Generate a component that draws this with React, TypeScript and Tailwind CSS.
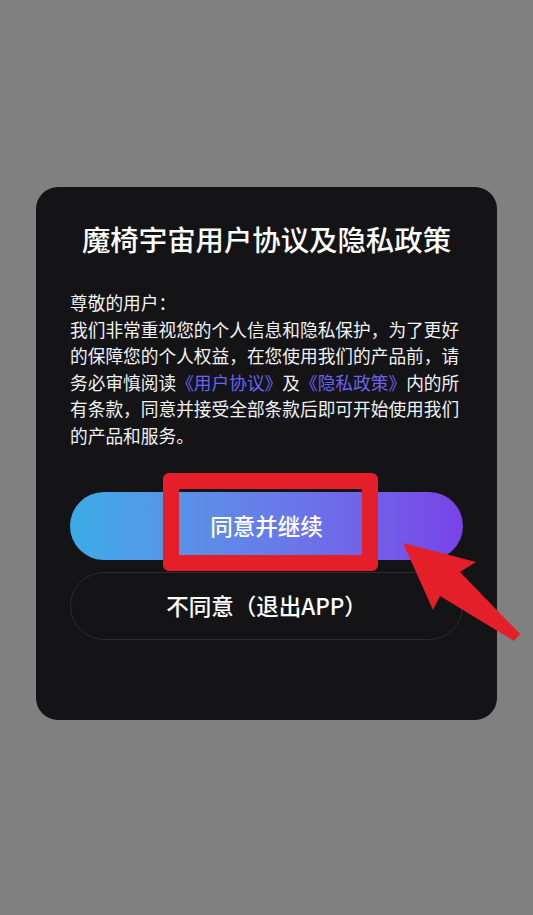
const font = { fontFamily: '"Noto Sans CJK SC", "Noto Sans", sans-serif' };

const bodyLines: (string | JSX.Element)[] = [
  '尊敬的用户：',
  '我们非常重视您的个人信息和隐私保护，为了更好',
  '的保障您的个人权益，在您使用我们的产品前，请',
  <>
    务必审慎阅读<span className="text-[#6b62ee]">《用户协议》</span>及
    <span className="text-[#6b62ee]">《隐私政策》</span>内的所
  </>,
  '有条款，同意并接受全部条款后即可开始使用我们',
  '的产品和服务。',
];

export default function App(): JSX.Element {
  return (
    <div className="relative min-h-[915px] w-full bg-[#808080] pt-[187px] px-[36px]" style={font}>
      <div className="flex h-[533px] flex-col rounded-[22px] bg-[#141417] px-[34px] pt-[32px]">
        <h1 className="whitespace-nowrap text-center text-[28.4px] leading-[40px] font-medium text-white">
          魔椅宇宙用户协议及隐私政策
        </h1>
        <div className="mt-[30px] text-[17.7px] leading-[26.5px] text-[#f2f2f2]">
          {bodyLines.map((line, i) => (
            <div key={i} className="whitespace-nowrap">
              {line}
            </div>
          ))}
        </div>
        <div className="mt-[44px] flex flex-col gap-[12px]">
          <button
            type="button"
            className="h-[68px] w-full rounded-full bg-gradient-to-r from-[#39ace6] to-[#7842e8] text-[22.5px] font-medium text-white"
          >
            同意并继续
          </button>
          <button
            type="button"
            className="h-[68px] w-full rounded-full border border-[#2c2c31] text-[22.5px] font-medium text-white"
          >
            不同意（退出APP）
          </button>
        </div>
      </div>

      {/* annotation overlay */}
      <div className="absolute left-[163px] top-[473px] h-[98px] w-[215px] rounded-[6px] border-[16px] border-[#e41f2a]" />
      <svg className="absolute left-0 top-0" width="533" height="915" viewBox="0 0 533 915">
        <polygon
          points="403,543 476,562 460,572 520,634 514,641 440,596 433,610"
          fill="#e41f2a"
          strokeLinejoin="round"
        />
      </svg>
    </div>
  );
}
